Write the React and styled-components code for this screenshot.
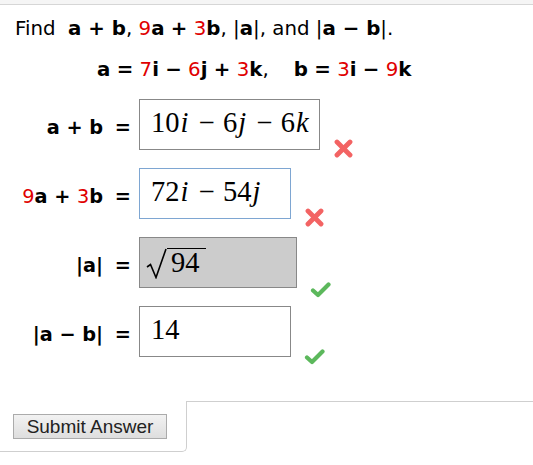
import React from "react";
import styled, { createGlobalStyle } from "styled-components";

const Global = createGlobalStyle`
  html, body { margin: 0; padding: 0; background: #fff; }
  body { font-family: "DejaVu Sans", Verdana, sans-serif; color: #000; }
`;

const TopBar = styled.div`
  height: 4px;
  background: #f5f5f5;
  border-bottom: 1px solid #d6d6d6;
`;

const Content = styled.div`
  padding: 13px 0 0 15px;
`;

const Prompt = styled.div`
  font-size: 19.8px;
  line-height: 22px;
`;

const Given = styled.div`
  font-size: 19.8px;
  line-height: 22px;
  margin: 19px 0 0 82px;
  white-space: pre;
`;

const B = styled.b`
  font-weight: bold;
`;

const R = styled.span`
  color: #e00000;
  font-weight: normal;
`;

const Rows = styled.div`
  display: flex;
  flex-direction: column;
  gap: 18px;
  margin-top: 18px;
  margin-left: -15px;
`;

const Row = styled.div`
  display: flex;
  align-items: flex-start;
  height: 51px;
`;

const Label = styled.div`
  width: 131px;
  text-align: right;
  font-size: 19.3px;
  line-height: 22px;
  padding-top: 18px;
  margin-right: 8px;
  font-weight: bold;
  white-space: pre;
`;

const Eq = styled.span`
  margin-left: 5px;
`;

const AnswerBox = styled.div`
  box-sizing: border-box;
  width: ${(p) => p.$w}px;
  height: 51px;
  border: 1px solid ${(p) => (p.$focus ? "#7ea6d2" : "#888")};
  background: ${(p) => (p.$disabled ? "#cccccc" : "#fff")};
  padding: 7px 0 0 11px;
  font-family: "Liberation Serif", "Times New Roman", serif;
  font-size: 28.5px;
  line-height: 32px;
  white-space: nowrap;
  display: flex;
  align-items: flex-start;
`;

const V = styled.i`
  font-style: italic;
  margin: 0 1.5px 0 1px;
`;

const Op = styled.span`
  margin: 0 8.5px;
`;

const Radicand = styled.span`
  border-top: 1.5px solid #000;
  padding: 0 6px 0 4px;
  line-height: 28px;
  margin-top: 3px;
`;

const Radical = styled.svg`
  width: 22px;
  height: 31px;
  margin-top: 3px;
  margin-left: -6px;
`;

const Mark = styled.svg`
  width: 21px;
  height: 21px;
  margin-left: 13px;
  margin-top: ${(p) => p.$top}px;
  flex: none;
`;

const Footer = styled.div`
  display: flex;
  margin-top: 44px;
`;

const ButtonCell = styled.div`
  width: 187px;
  height: 51px;
  border-right: 1px solid #cfcfcf;
  border-bottom: 1px solid #cfcfcf;
  border-bottom-right-radius: 5px;
  box-sizing: border-box;
  padding: 13px 0 0 13px;
`;

const Spacer = styled.div`
  flex: 1;
  border-top: 1px solid #cfcfcf;
`;

const SubmitButton = styled.button`
  box-sizing: border-box;
  width: 154px;
  height: 25px;
  margin: 0;
  padding: 0;
  border: 1px solid #ababab;
  background: linear-gradient(#f2f2f2, #dedede);
  font-family: "Liberation Sans", Arial, sans-serif;
  font-size: 19px;
  line-height: 22px;
  color: #222;
`;

const Cross = ({ top }) => (
  <Mark $top={top} viewBox="0 0 21 21">
    <g stroke="#f25656" strokeWidth="4.8" strokeLinecap="round" opacity="0.92">
      <line x1="4" y1="4" x2="17" y2="17" />
      <line x1="17" y1="4" x2="4" y2="17" />
    </g>
  </Mark>
);

const Check = ({ top }) => (
  <Mark $top={top} viewBox="0 0 21 21">
    <path
      d="M3 11.5 L8 16 L18.5 5.5"
      fill="none"
      stroke="#5cb85c"
      strokeWidth="4.2"
      strokeLinecap="round"
      strokeLinejoin="round"
    />
  </Mark>
);

export default function App() {
  return (
    <>
      <Global />
      <TopBar />
      <Content>
        <Prompt>
          Find&nbsp; <B>a + b</B>, <R>9</R>
          <B>a</B> <B>+</B> <R>3</R>
          <B>b</B>, |<B>a</B>|, and |<B>a − b</B>|.
        </Prompt>
        <Given>
          <B>a</B> <B>=</B> <R>7</R>
          <B>i</B> <B>−</B> <R>6</R>
          <B>j</B> <B>+</B> <R>3</R>
          <B>k</B>,{"    "}
          <B>b</B> <B>=</B> <R>3</R>
          <B>i</B> <B>−</B> <R>9</R>
          <B>k</B>
        </Given>
        <Rows>
          <Row>
            <Label>
              a + b <Eq>=</Eq>
            </Label>
            <AnswerBox $w={181}>
              10<V>i</V>
              <Op>−</Op>6<V>j</V>
              <Op>−</Op>6<V>k</V>
            </AnswerBox>
            <Cross top={39} />
          </Row>
          <Row>
            <Label>
              <R>9</R>a + <R>3</R>b <Eq>=</Eq>
            </Label>
            <AnswerBox $w={152} $focus>
              72<V>i</V>
              <Op>−</Op>54<V>j</V>
            </AnswerBox>
            <Cross top={39} />
          </Row>
          <Row>
            <Label>
              |a| <Eq>=</Eq>
            </Label>
            <AnswerBox $w={158} $disabled>
              <Radical viewBox="0 0 22 31">
                <path
                  d="M2 19 L5.5 16.5 L11 29.5 L21 1"
                  fill="none"
                  stroke="#000"
                  strokeWidth="1.6"
                  strokeLinejoin="miter"
                />
              </Radical>
              <Radicand>94</Radicand>
            </AnswerBox>
            <Check top={42} />
          </Row>
          <Row>
            <Label>
              |a − b| <Eq>=</Eq>
            </Label>
            <AnswerBox $w={152}>14</AnswerBox>
            <Check top={40} />
          </Row>
        </Rows>
      </Content>
      <Footer>
        <ButtonCell>
          <SubmitButton>Submit Answer</SubmitButton>
        </ButtonCell>
        <Spacer />
      </Footer>
    </>
  );
}
